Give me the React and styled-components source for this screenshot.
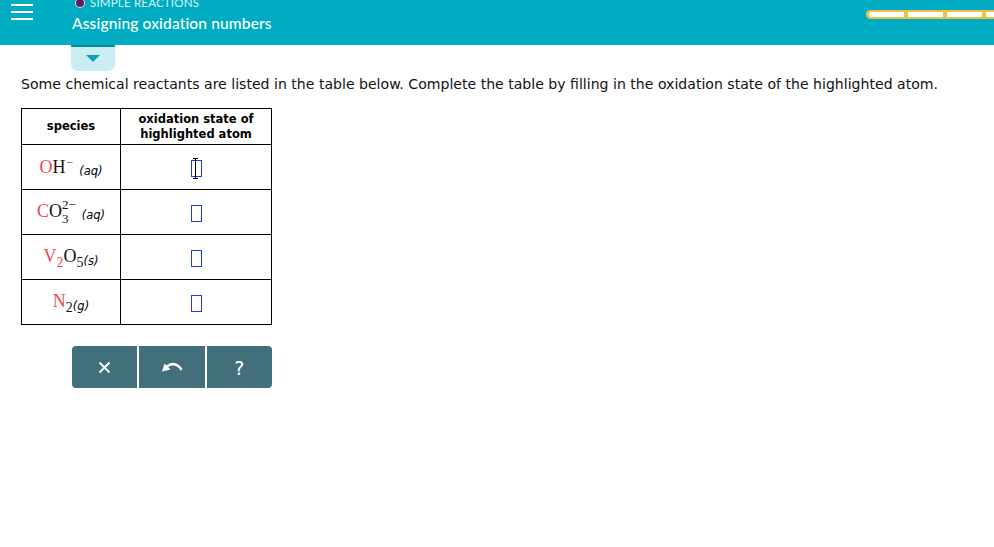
import React from "react"
import styled, { createGlobalStyle } from "styled-components"

const GlobalStyle = createGlobalStyle`
  html, body {
    margin: 0;
    padding: 0;
    background: #ffffff;
  }
  body {
    font-family: "DejaVu Sans", Verdana, sans-serif;
    overflow: hidden;
  }
`

const getRows = () => [
  {
    key: "oh",
    formula: (
      <>
        <Hi>O</Hi>H<Sup>−</Sup>
      </>
    ),
    phase: "(aq)",
    active: true,
  },
  {
    key: "co3",
    formula: (
      <>
        <Hi>C</Hi>O
        <Stack>
          <span>2−</span>
          <span>3</span>
        </Stack>
      </>
    ),
    phase: "(aq)",
  },
  {
    key: "v2o5",
    formula: (
      <>
        <Hi>V</Hi>
        <Sub $red>2</Sub>O<Sub>5</Sub>
      </>
    ),
    phase: "(s)",
    tight: true,
  },
  {
    key: "n2",
    formula: (
      <>
        <Hi>N</Hi>
        <Sub>2</Sub>
      </>
    ),
    phase: "(g)",
    tight: true,
  },
]

const App = () => {
  const rows = getRows()
  return (
    <>
      <GlobalStyle />
      <Page>
        <Header>
          <Menu>
            <span />
            <span />
            <span />
          </Menu>
          <TitleBlock>
            <Topic>
              <Dot />
              SIMPLE REACTIONS
            </Topic>
            <Title>Assigning oxidation numbers</Title>
          </TitleBlock>
          <Progress>
            <Segment />
            <Segment />
            <Segment />
            <Segment />
          </Progress>
        </Header>

        <Tab>
          <Arrow />
        </Tab>

        <Content>
          <Prompt>
            Some chemical reactants are listed in the table below. Complete the table by
            filling in the oxidation state of the highlighted atom.
          </Prompt>

          <Table>
            <thead>
              <tr>
                <HeadCell $w={98}>species</HeadCell>
                <HeadCell>
                  oxidation state of
                  <br />
                  highlighted atom
                </HeadCell>
              </tr>
            </thead>
            <tbody>
              {rows.map((row) => (
                <tr key={row.key}>
                  <SpeciesCell>
                    <Formula>{row.formula}</Formula>
                    <Phase $tight={row.tight}>{row.phase}</Phase>
                  </SpeciesCell>
                  <AnswerCell>
                    <AnswerBox>{row.active && <Cursor />}</AnswerBox>
                  </AnswerCell>
                </tr>
              ))}
            </tbody>
          </Table>

          <Toolbar>
            <ToolButton aria-label="clear">
              <svg width="13" height="13" viewBox="0 0 13 13">
                <path d="M1.5 1.5 L11.5 11.5 M11.5 1.5 L1.5 11.5" stroke="#fff" strokeWidth="2" />
              </svg>
            </ToolButton>
            <ToolButton aria-label="undo">
              <svg width="24" height="14" viewBox="0 0 24 14">
                <path
                  d="M7 6.5 C11 3, 17 3, 21 9"
                  fill="none"
                  stroke="#fff"
                  strokeWidth="2.6"
                  strokeLinecap="round"
                />
                <path d="M2 11.5 L4.5 3.5 L10.5 9.5 Z" fill="#fff" />
              </svg>
            </ToolButton>
            <ToolButton aria-label="help">
              <HelpMark>?</HelpMark>
            </ToolButton>
          </Toolbar>
        </Content>
      </Page>
    </>
  )
}

export default App

const Page = styled.div`
  width: 994px;
  height: 547px;
  background: #ffffff;
`

const Header = styled.header`
  height: 45px;
  background: #00acc2;
  display: flex;
  align-items: flex-start;
  position: relative;
  overflow: hidden;
`

const Menu = styled.div`
  width: 22px;
  padding: 4px 0 0 11px;
  display: flex;
  flex-direction: column;
  gap: 5px;

  span {
    display: block;
    height: 2px;
    background: #ffffff;
  }
`

const TitleBlock = styled.div`
  margin-left: 39px;
  display: flex;
  flex-direction: column;
  flex: 1;
`

const Topic = styled.div`
  margin-top: -4px;
  height: 13px;
  display: flex;
  align-items: center;
  gap: 6px;
  padding-left: 4px;
  font-family: Lato, "Open Sans", sans-serif;
  font-size: 11.5px;
  letter-spacing: 0.2px;
  color: #d9f2f6;
`

const Dot = styled.span`
  width: 8px;
  height: 8px;
  border-radius: 50%;
  background: #5b1f5f;
  box-shadow: 0 0 0 1px #e9e0ea;
`

const Title = styled.div`
  margin-top: 5px;
  font-family: Lato, "Open Sans", sans-serif;
  font-size: 15.5px;
  font-weight: 500;
  color: #ffffff;
  letter-spacing: 0.15px;
`

const Progress = styled.div`
  position: absolute;
  left: 866px;
  top: 10px;
  width: 140px;
  height: 9px;
  display: flex;
  gap: 4px;
  padding: 0 0 0 3px;
  background: #efc044;
  border-radius: 5px 0 0 5px;
  box-sizing: border-box;
  align-items: center;
`

const Segment = styled.span`
  flex: 0 0 35px;
  height: 5px;
  background: #ffffff;

  &:first-child {
    border-radius: 3px 0 0 3px;
  }
`

const Tab = styled.div`
  margin-left: 71px;
  width: 44px;
  height: 26px;
  box-sizing: border-box;
  border-top: 2px solid #0b8a97;
  background: #c8eef3;
  border-radius: 0 0 7px 7px;
  display: flex;
  justify-content: center;
  padding-top: 8px;
`

const Arrow = styled.span`
  width: 0;
  height: 0;
  border-left: 7px solid transparent;
  border-right: 7px solid transparent;
  border-top: 7px solid #0aa3b8;
`

const Content = styled.main`
  padding: 0 0 0 21px;
`

const Prompt = styled.p`
  margin: 4px 0 0;
  font-family: "DejaVu Sans", Verdana, sans-serif;
  font-size: 14.08px;
  line-height: 18px;
  color: #111111;
  white-space: nowrap;
`

const Table = styled.table`
  margin-top: 15px;
  border-collapse: collapse;
  width: 251px;
  font-family: "DejaVu Sans", Verdana, sans-serif;
  color: #000000;
`

const HeadCell = styled.th`
  width: ${(p) => (p.$w ? `${p.$w}px` : "auto")};
  height: 35px;
  border: 1px solid #000000;
  font-size: 11.5px;
  font-weight: bold;
  line-height: 15px;
  padding: 0;
  text-align: center;
  vertical-align: middle;
`

const SpeciesCell = styled.td`
  height: 44px;
  border: 1px solid #000000;
  padding: 0;
  text-align: center;
  white-space: nowrap;
`

const AnswerCell = styled.td`
  height: 44px;
  border: 1px solid #000000;
  padding: 0;
  text-align: center;
`

const Formula = styled.span`
  font-family: "Liberation Serif", "Times New Roman", serif;
  font-size: 18px;
  color: #111111;
`

const Hi = styled.span`
  color: #f0474f;
`

const Sup = styled.sup`
  font-size: 12px;
  vertical-align: 7px;
  line-height: 0;
  color: #444;
  margin-left: 1px;
`

const Sub = styled.sub`
  font-size: 14px;
  vertical-align: -5px;
  line-height: 0;
  color: ${(p) => (p.$red ? "#f0474f" : "#111111")};
`

const Stack = styled.span`
  display: inline-flex;
  flex-direction: column;
  vertical-align: 8px;
  font-size: 13px;
  line-height: 14px;
  text-align: left;
`

const Phase = styled.span`
  font-family: "DejaVu Sans", Verdana, sans-serif;
  font-style: italic;
  font-size: 11.5px;
  margin-left: ${(p) => (p.$tight ? "0" : "6px")};
  vertical-align: ${(p) => (p.$tight ? "-3px" : "-2px")};
`

const AnswerBox = styled.span`
  position: relative;
  display: inline-block;
  width: 9px;
  height: 15px;
  border: 1.5px solid #1d3df5;
  vertical-align: middle;
`

const Cursor = styled.span`
  position: absolute;
  left: 3px;
  top: -3px;
  width: 1px;
  height: 21px;
  background: #000;

  &::before,
  &::after {
    content: "";
    position: absolute;
    left: -2px;
    width: 5px;
    height: 1px;
    background: #000;
  }
  &::before {
    top: 0;
  }
  &::after {
    bottom: 0;
  }
`

const Toolbar = styled.div`
  margin: 21px 0 0 51px;
  width: 200px;
  height: 42px;
  display: flex;
  gap: 2px;
  background: #ffffff;
  border-radius: 4px;
  overflow: hidden;
`

const ToolButton = styled.button`
  flex: 1;
  border: none;
  padding: 0;
  background: #41707b;
  display: flex;
  align-items: center;
  justify-content: center;
  cursor: pointer;
`

const HelpMark = styled.span`
  font-family: "DejaVu Sans", Verdana, sans-serif;
  font-size: 19px;
  color: #ffffff;
  margin-top: 1px;
`
